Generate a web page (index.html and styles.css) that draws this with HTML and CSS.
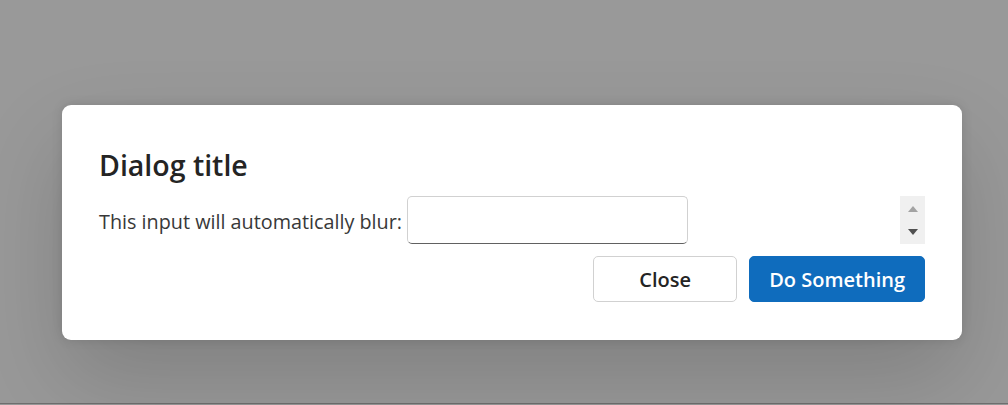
FILE: index.html
```html
<!DOCTYPE html>
<html lang="en">
<head>
<meta charset="utf-8">
<title>Dialog</title>
<link rel="stylesheet" href="styles.css">
</head>
<body>
<div class="backdrop">
  <div class="dialog" role="dialog" aria-labelledby="dlg-title">
    <h2 class="dialog-title" id="dlg-title">Dialog title</h2>
    <div class="dialog-content">
      <div class="content-inner">
        <label class="field-label" for="blur-input">This input will automatically blur:</label>
        <input class="text-input" id="blur-input" type="text">
      </div>
      <div class="scrollbar" aria-hidden="true">
        <span class="arrow arrow-up"></span>
        <span class="arrow arrow-down"></span>
      </div>
    </div>
    <div class="dialog-actions">
      <button class="btn btn-secondary" type="button">Close</button>
      <button class="btn btn-primary" type="button">Do Something</button>
    </div>
  </div>
</div>
</body>
</html>
```
FILE: styles.css
```css
html, body {
  margin: 0;
  padding: 0;
  height: 100%;
  overflow: hidden;
}
body {
  background: #999999;
  font-family: "Open Sans", "Noto Sans", "Liberation Sans", sans-serif;
}
.backdrop {
  height: 404px;
  border-bottom: 1px solid #6f6f6f;
  padding: 105px 0 0 62px;
  box-sizing: border-box;
}
.dialog {
  width: 900px;
  height: 235px;
  box-sizing: border-box;
  background: #ffffff;
  border-radius: 9px;
  padding: 42px 37px 38px 37px;
  box-shadow: 0 0 12px rgba(0, 0, 0, 0.12), 0 40px 90px rgba(0, 0, 0, 0.16);
}
.dialog-title {
  margin: 0;
  font-size: 28.5px;
  line-height: 36px;
  font-weight: 600;
  color: #242424;
}
.dialog-content {
  display: flex;
  height: 48px;
  margin-top: 13px;
}
.content-inner {
  flex: 1;
  display: flex;
  align-items: center;
}
.field-label {
  font-size: 19.8px;
  line-height: 27px;
  margin-top: 3px;
  color: #383838;
  margin-right: 5px;
}
.text-input {
  width: 281px;
  height: 48px;
  box-sizing: border-box;
  border: 1px solid #d1d1d1;
  border-bottom-color: #616161;
  border-radius: 5px;
  background: #ffffff;
  padding: 0 12px;
  font: inherit;
  outline: none;
}
.scrollbar {
  width: 25px;
  background: #f0f0f0;
  display: flex;
  flex-direction: column;
  align-items: center;
  justify-content: space-between;
  padding: 10px 0 9px;
  box-sizing: border-box;
}
.arrow {
  width: 0;
  height: 0;
  border-left: 5.5px solid transparent;
  border-right: 5.5px solid transparent;
}
.arrow-up {
  border-bottom: 6px solid #a3a3a3;
}
.arrow-down {
  border-top: 6px solid #505050;
}
.dialog-actions {
  display: flex;
  justify-content: flex-end;
  gap: 12px;
  margin-top: 12px;
}
.btn {
  height: 46px;
  min-width: 144px;
  box-sizing: border-box;
  border-radius: 5px;
  font-family: inherit;
  font-size: 20px;
  font-weight: 600;
  padding: 0 19px;
  cursor: pointer;
}
.btn-secondary {
  background: #ffffff;
  border: 1px solid #d1d1d1;
  color: #242424;
}
.btn-primary {
  background: #0f6cbd;
  border: 1px solid #0f6cbd;
  color: #ffffff;
}
```
